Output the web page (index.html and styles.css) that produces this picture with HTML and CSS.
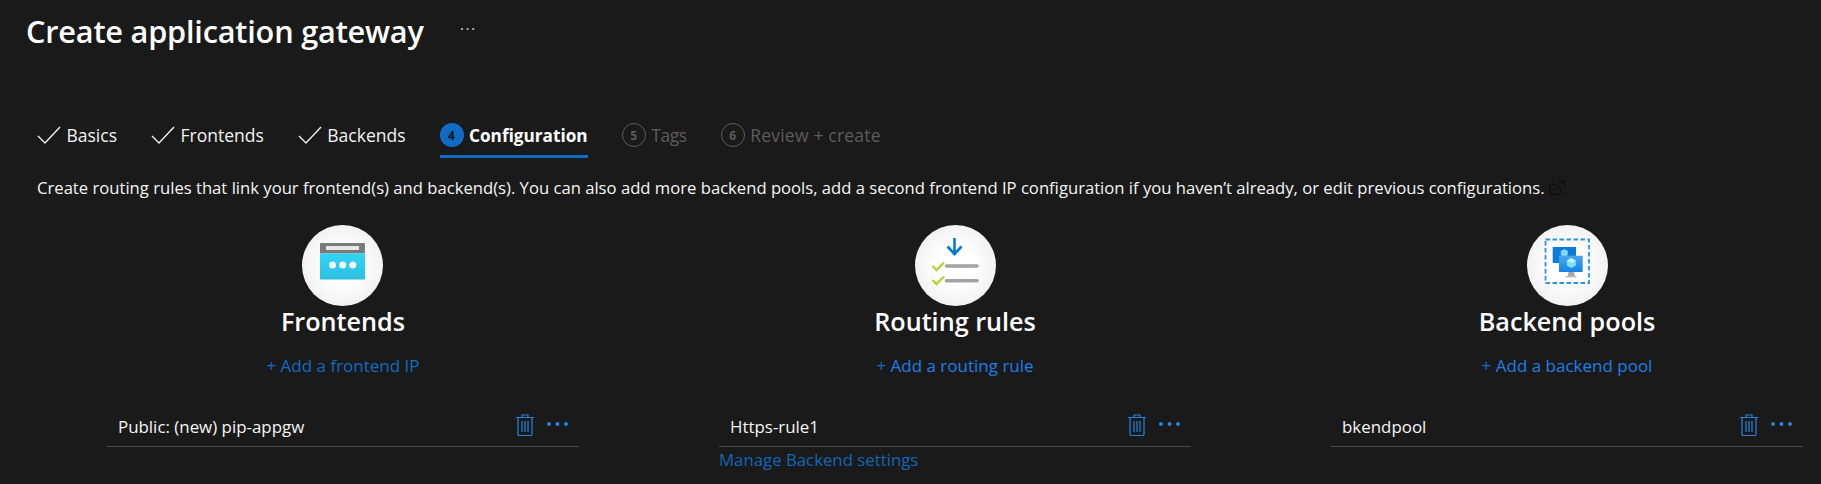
FILE: index.html
```html
<!DOCTYPE html>
<html lang="en">
<head>
  <meta charset="UTF-8" />
  <title>Create application gateway</title>
  <link rel="stylesheet" href="styles.css">
</head>
<body>

  <div class="title-row">
    <h1>Create application gateway</h1>
    <span class="title-more">&middot;&middot;&middot;</span>
  </div>

  <div class="tabs">
    <div class="tab">
      <svg class="check" width="24" height="20" viewBox="0 0 24 20"><path d="M1 11 L8 18 L23 2" fill="none" stroke="#f2f2f2" stroke-width="1.4"/></svg>
      <span>Basics</span>
    </div>
    <div class="tab">
      <svg class="check" width="24" height="20" viewBox="0 0 24 20"><path d="M1 11 L8 18 L23 2" fill="none" stroke="#f2f2f2" stroke-width="1.4"/></svg>
      <span>Frontends</span>
    </div>
    <div class="tab">
      <svg class="check" width="24" height="20" viewBox="0 0 24 20"><path d="M1 11 L8 18 L23 2" fill="none" stroke="#f2f2f2" stroke-width="1.4"/></svg>
      <span>Backends</span>
    </div>
    <div class="tab tab-active">
      <span class="step step-current">4</span>
      <span>Configuration</span>
    </div>
    <div class="tab tab-disabled">
      <span class="step">5</span>
      <span class="tab-tags">Tags</span>
    </div>
    <div class="tab tab-disabled">
      <span class="step">6</span>
      <span class="tab-review">Review + create</span>
    </div>
  </div>

  <p class="desc">
    Create routing rules that link your frontend(s) and backend(s). You can also add more backend pools, add a second frontend IP configuration if you haven’t already, or edit previous configurations.
    <svg class="ext" width="16" height="15" viewBox="0 0 16 15"><path d="M8 4.5 H1 V14.5 H11 V8 M5.5 10 L15 0.8 M9.5 0.5 H15.5 V6" fill="none" stroke="#0b0b0b" stroke-width="1"/></svg>
  </p>

  <div class="columns">

    <div class="column">
      <div class="badge">
        <svg width="81" height="81" viewBox="0 0 81 81">
          <defs>
            <linearGradient id="fe" x1="0" y1="0" x2="0" y2="1"><stop offset="0" stop-color="#32d4f5"/><stop offset="1" stop-color="#2cc0e2"/></linearGradient>
          </defs>
          <path d="M18 19 a1 1 0 0 1 1 -1 h43 a1 1 0 0 1 1 1 v9.500 h-45z" fill="#7a7a7a"/>
          <rect x="24" y="21" width="33" height="4" fill="#e8e8e8"/>
          <path d="M18 28.500 h45 v25 a1 1 0 0 1 -1 1 h-43 a1 1 0 0 1 -1 -1z" fill="url(#fe)"/>
          <circle cx="30.500" cy="40" r="3.500" fill="#f4f4f4"/>
          <circle cx="40.700" cy="40" r="3.500" fill="#f4f4f4"/>
          <circle cx="50.800" cy="40" r="3.500" fill="#f4f4f4"/>
        </svg>
      </div>
      <h2>Frontends</h2>
      <a class="add-link add-link-dim"><span class="plus">+</span> Add a frontend IP</a>
      <div class="item">
        <span class="item-name">Public: (new) pip-appgw</span>
        <svg class="trash" width="18" height="22" viewBox="0 0 18 22"><path d="M0 3.500 H18 M2 3.500 V20 a1.500 1.500 0 0 0 1.500 1.500 H14.500 a1.500 1.500 0 0 0 1.500 -1.500 V3.500 M6 3.500 V1 H12 V3.500 M6 7 V18 M9 7 V18 M12 7 V18" fill="none" stroke="#2285dc" stroke-width="1.200"/></svg>
        <svg class="dots" width="22" height="6" viewBox="0 0 22 6"><circle cx="2" cy="3" r="2" fill="#2285dc"/><circle cx="10.500" cy="3" r="2" fill="#2285dc"/><circle cx="19" cy="3" r="2" fill="#2285dc"/></svg>
      </div>
    </div>

    <div class="column">
      <div class="badge">
        <svg width="81" height="81" viewBox="0 0 81 81">
          <path d="M39.500 13 V29 M32.500 21.500 L39.500 29 L46.500 21.500" fill="none" stroke="#0a78d0" stroke-width="2.600"/>
          <path d="M17.500 41 L21.500 45 L29 37.500 M17.500 55 L21.500 59 L29 51.500" fill="none" stroke="#b5d334" stroke-width="2.400"/>
          <path d="M31.500 41 H62 M31.500 55.700 H62" fill="none" stroke="#a3a3a3" stroke-width="3.600" stroke-linecap="round"/>
        </svg>
      </div>
      <h2>Routing rules</h2>
      <a class="add-link"><span class="plus">+</span> Add a routing rule</a>
      <div class="item">
        <span class="item-name">Https-rule1</span>
        <svg class="trash" width="18" height="22" viewBox="0 0 18 22"><path d="M0 3.500 H18 M2 3.500 V20 a1.500 1.500 0 0 0 1.500 1.500 H14.500 a1.500 1.500 0 0 0 1.500 -1.500 V3.500 M6 3.500 V1 H12 V3.500 M6 7 V18 M9 7 V18 M12 7 V18" fill="none" stroke="#2285dc" stroke-width="1.200"/></svg>
        <svg class="dots" width="22" height="6" viewBox="0 0 22 6"><circle cx="2" cy="3" r="2" fill="#2285dc"/><circle cx="10.500" cy="3" r="2" fill="#2285dc"/><circle cx="19" cy="3" r="2" fill="#2285dc"/></svg>
      </div>
      <a class="manage-link">Manage Backend settings</a>
    </div>

    <div class="column">
      <div class="badge">
        <svg width="81" height="81" viewBox="0 0 81 81">
          <defs>
            <linearGradient id="vm" x1="0" y1="0" x2="0" y2="1"><stop offset="0" stop-color="#4aa6ee"/><stop offset="1" stop-color="#1683e4"/></linearGradient>
          </defs>
          <rect x="18.500" y="14.500" width="43.500" height="43.500" fill="none" stroke="#2b92e4" stroke-width="1.800" stroke-dasharray="4.500 2.500"/>
          <rect x="25.700" y="22" width="23.300" height="16" fill="#0f7bd8"/>
          <path d="M37.300 24 l3.500 2 v4 l-3.500 2 l-3.500 -2 v-4z" fill="#7fd8f2"/>
          <rect x="32" y="30.700" width="23.700" height="16.300" fill="url(#vm)"/>
          <path d="M44.300 33 l4.500 2.500 v5 l-4.500 2.500 l-4.500 -2.500 v-5z" fill="#7fe0f6"/>
          <path d="M44.300 33 l4.500 2.500 l-4.500 2.500 l-4.500 -2.500z" fill="#c2f0fb"/>
          <path d="M41.500 47 h5.500 l0.800 4 h-7.100z" fill="#a8a8a8"/>
          <rect x="38.500" y="51" width="11" height="1.500" fill="#bdbdbd"/>
        </svg>
      </div>
      <h2>Backend pools</h2>
      <a class="add-link"><span class="plus">+</span> Add a backend pool</a>
      <div class="item">
        <span class="item-name">bkendpool</span>
        <svg class="trash" width="18" height="22" viewBox="0 0 18 22"><path d="M0 3.500 H18 M2 3.500 V20 a1.500 1.500 0 0 0 1.500 1.500 H14.500 a1.500 1.500 0 0 0 1.500 -1.500 V3.500 M6 3.500 V1 H12 V3.500 M6 7 V18 M9 7 V18 M12 7 V18" fill="none" stroke="#2285dc" stroke-width="1.200"/></svg>
        <svg class="dots" width="22" height="6" viewBox="0 0 22 6"><circle cx="2" cy="3" r="2" fill="#2285dc"/><circle cx="10.500" cy="3" r="2" fill="#2285dc"/><circle cx="19" cy="3" r="2" fill="#2285dc"/></svg>
      </div>
    </div>

  </div>

</body>
</html>
```

FILE: styles.css
```css
body {
  margin: 0;
  background: #1b1a1a;
  color: #f5f5f5;
  font-family: "Open Sans", "Noto Sans", sans-serif;
}
.title-row {
  display: flex;
  align-items: center;
  height: 40px;
  padding: 11px 0 0 26px;
}
h1 {
  margin: 0;
  font-size: 30.7px;
  font-weight: 600;
  line-height: 40px;
  color: #fff;
  letter-spacing: -0.2px;
}
.title-more {
  margin: -5px 0 0 36px;
  font-size: 16px;
  letter-spacing: 1.5px;
  color: #c8c8c8;
}
.tabs {
  display: flex;
  gap: 34px;
  margin: 64px 0 0 37px;
}
.tab {
  display: flex;
  align-items: center;
  gap: 5.5px;
  height: 40px;
  border-bottom: 3px solid transparent;
  font-size: 17.5px;
  color: #f2f2f2;
}
.tab-active {
  border-bottom-color: #0f6cc4;
  font-size: 17.2px;
  font-weight: 700;
  color: #fff;
}
.tab-disabled {
  color: #5c5c5c;
}
.tab-tags {
  letter-spacing: -0.4px;
}
.tab-review {
  letter-spacing: 0.2px;
}
.step {
  display: flex;
  align-items: center;
  justify-content: center;
  box-sizing: border-box;
  width: 24px;
  height: 24px;
  border: 1.5px solid #5c5c5c;
  border-radius: 50%;
  font-size: 12px;
  font-weight: 700;
}
.step-current {
  border: none;
  background: #0f6cc4;
  color: #111;
}
.desc {
  margin: 19px 0 0 37px;
  font-size: 16.65px;
  line-height: 22px;
  color: #f5f5f5;
  white-space: nowrap;
}
.ext {
  margin-left: 0;
  vertical-align: -1px;
}
.columns {
  display: grid;
  grid-template-columns: repeat(3, 472px);
  column-gap: 140px;
  margin-top: 26px;
  padding-left: 107px;
}
.column {
  display: flex;
  flex-direction: column;
  align-items: center;
}
.badge {
  width: 81px;
  height: 81px;
  border-radius: 50%;
  background: radial-gradient(circle, #ffffff 30%, #e9e9e9 100%);
}
.column:first-child .badge {
  margin-right: 1px;
}
.badge svg {
  display: block;
}
h2 {
  margin: -1px 0 0;
  font-size: 25.2px;
  font-weight: 600;
  line-height: 32px;
  color: #fff;
}
.add-link {
  margin-top: 19px;
  font-size: 17px;
  line-height: 20px;
  color: #1a7fe8;
}
.add-link-dim {
  color: #0f6cc4;
}
.plus {
  color: #0f6cc4;
}
.item {
  display: flex;
  align-items: center;
  align-self: stretch;
  box-sizing: border-box;
  height: 39px;
  margin-top: 32px;
  padding: 0 10px 2px 11px;
  border-bottom: 1px solid #4a4a4a;
}
.item-name {
  flex: 1;
  font-size: 16.9px;
  color: #f5f5f5;
}
.trash {
  margin: -3px 13px 0 0;
}
.dots {
  margin-top: -5px;
}
.manage-link {
  align-self: flex-start;
  margin-top: 3px;
  font-size: 16.8px;
  line-height: 20px;
  color: #0f66b8;
}
```
